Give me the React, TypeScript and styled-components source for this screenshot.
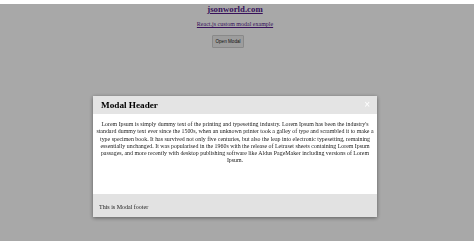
import styled, { createGlobalStyle } from "styled-components";
import { useState } from "react";

const GlobalStyle = createGlobalStyle`
  html, body {
    margin: 0;
    padding: 0;
    background: #ffffff;
    font-family: "Liberation Serif", "Times New Roman", serif;
  }
`;

const Page = styled.div`
  width: 470px;
  height: 241px;
  display: flex;
  flex-direction: column;
  align-items: center;
  padding-top: 4px;
  box-sizing: border-box;
`;

const Title = styled.a`
  font-size: 8.8px;
  font-weight: bold;
  color: #551a8b;
  text-decoration: underline;
  line-height: 11px;
`;

const SubLink = styled.a`
  margin-top: 5px;
  font-size: 6px;
  color: #551a8b;
  text-decoration: underline;
  line-height: 8px;
`;

const OpenButton = styled.button`
  margin-top: 7px;
  margin-right: 14px;
  height: 13px;
  width: 32px;
  padding: 0;
  font-family: "Liberation Sans", Arial, sans-serif;
  font-size: 4.6px;
  color: #222;
  background: #efefef;
  border: 1px solid #d0d0d0;
  border-radius: 1px;
`;

const Overlay = styled.div`
  position: fixed;
  left: 0;
  right: 0;
  top: 4px;
  bottom: 0;
  background: rgba(0, 0, 0, 0.34);
`;

const Center = styled.div`
  width: 470px;
  display: flex;
  justify-content: center;
  padding-top: 92px;
`;

const Modal = styled.div`
  width: 284px;
  background: #ffffff;
  box-shadow: 0 1px 4px rgba(0, 0, 0, 0.45);
  display: flex;
  flex-direction: column;
`;

const Header = styled.div`
  height: 18px;
  background: #e4e4e4;
  display: flex;
  align-items: center;
  justify-content: space-between;
  padding: 0 8px;
`;

const HeaderTitle = styled.h2`
  margin: 0;
  font-size: 9.2px;
  font-weight: bold;
  color: #000;
`;

const Close = styled.span`
  font-family: "Liberation Sans", Arial, sans-serif;
  font-size: 10px;
  color: #ffffff;
  line-height: 1;
  margin-right: -1px;
`;

const Body = styled.div`
  height: 80px;
  box-sizing: border-box;
  padding: 7px 3px 0;
  font-size: 5.9px;
  line-height: 7.3px;
  text-align: center;
  color: #222;
`;

const Footer = styled.div`
  height: 23px;
  background: #e2e2e2;
  display: flex;
  align-items: center;
  padding: 3px 6px 0;
  box-sizing: border-box;
  font-size: 6px;
  color: #222;
`;

export default function App() {
  const [open, setOpen] = useState(true);

  return (
    <>
      <GlobalStyle />
      <Page>
        <Title href="#">jsonworld.com</Title>
        <SubLink href="#">React.js custom modal example</SubLink>
        <OpenButton onClick={() => setOpen(true)}>Open Modal</OpenButton>
      </Page>
      {open && (
        <Overlay>
          <Center>
            <Modal>
              <Header>
                <HeaderTitle>Modal Header</HeaderTitle>
                <Close onClick={() => setOpen(false)}>×</Close>
              </Header>
              <Body>
                Lorem Ipsum is simply dummy text of the printing and typesetting
                industry. Lorem Ipsum has been the industry's standard dummy
                text ever since the 1500s, when an unknown printer took a galley
                of type and scrambled it to make a type specimen book. It has
                survived not only five centuries, but also the leap into
                electronic typesetting, remaining essentially unchanged. It was
                popularised in the 1960s with the release of Letraset sheets
                containing Lorem Ipsum passages, and more recently with desktop
                publishing software like Aldus PageMaker including versions of
                Lorem Ipsum.
              </Body>
              <Footer>This is Modal footer</Footer>
            </Modal>
          </Center>
        </Overlay>
      )}
    </>
  );
}
